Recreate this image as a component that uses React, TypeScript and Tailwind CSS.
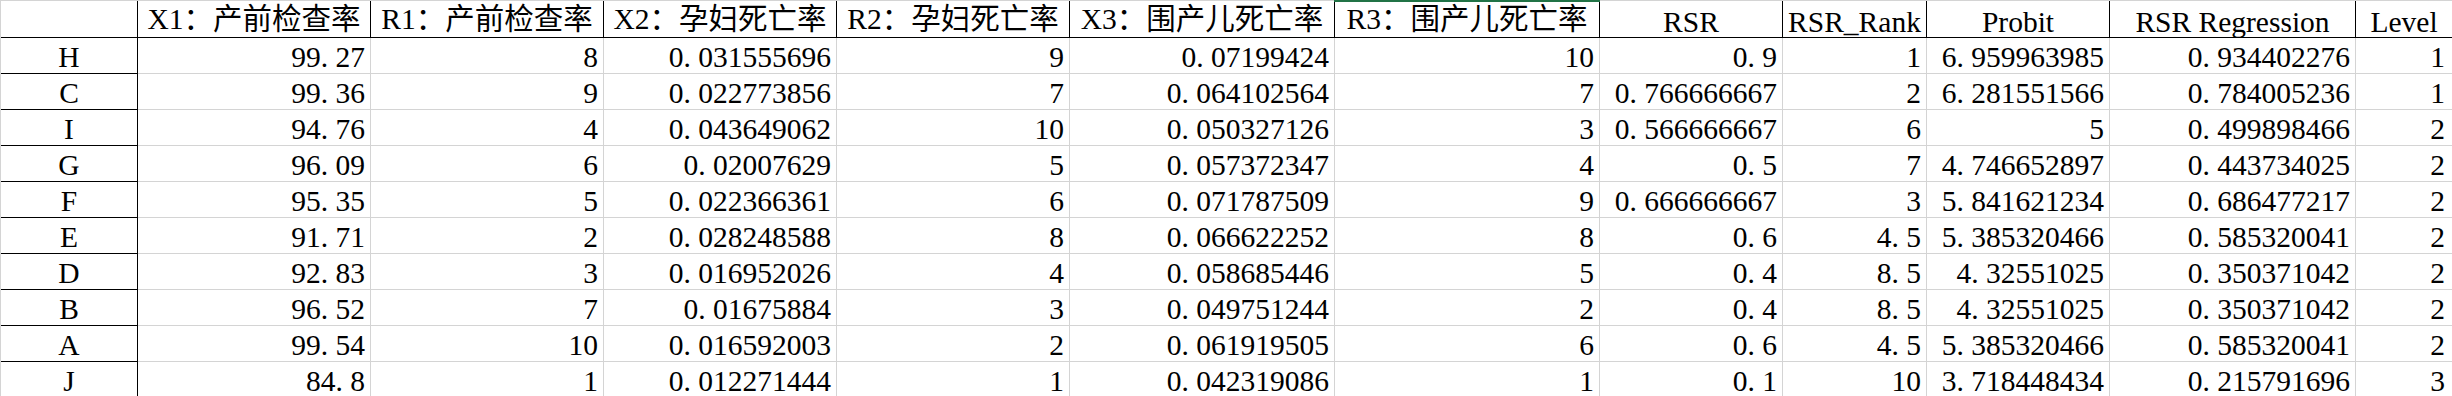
import React from "react";

const headers = [
  "",
  "X1：产前检查率",
  "R1：产前检查率",
  "X2：孕妇死亡率",
  "R2：孕妇死亡率",
  "X3：围产儿死亡率",
  "R3：围产儿死亡率",
  "RSR",
  "RSR_Rank",
  "Probit",
  "RSR Regression",
  "Level",
];

const rows: string[][] = [
  ["H", "99.27", "8", "0.031555696", "9", "0.07199424", "10", "0.9", "1", "6.959963985", "0.934402276", "1"],
  ["C", "99.36", "9", "0.022773856", "7", "0.064102564", "7", "0.766666667", "2", "6.281551566", "0.784005236", "1"],
  ["I", "94.76", "4", "0.043649062", "10", "0.050327126", "3", "0.566666667", "6", "5", "0.499898466", "2"],
  ["G", "96.09", "6", "0.02007629", "5", "0.057372347", "4", "0.5", "7", "4.746652897", "0.443734025", "2"],
  ["F", "95.35", "5", "0.022366361", "6", "0.071787509", "9", "0.666666667", "3", "5.841621234", "0.686477217", "2"],
  ["E", "91.71", "2", "0.028248588", "8", "0.066622252", "8", "0.6", "4.5", "5.385320466", "0.585320041", "2"],
  ["D", "92.83", "3", "0.016952026", "4", "0.058685446", "5", "0.4", "8.5", "4.32551025", "0.350371042", "2"],
  ["B", "96.52", "7", "0.01675884", "3", "0.049751244", "2", "0.4", "8.5", "4.32551025", "0.350371042", "2"],
  ["A", "99.54", "10", "0.016592003", "2", "0.061919505", "6", "0.6", "4.5", "5.385320466", "0.585320041", "2"],
  ["J", "84.8", "1", "0.012271444", "1", "0.042319086", "1", "0.1", "10", "3.718448434", "0.215791696", "3"],
];

function Num({ v }: { v: string }) {
  const i = v.indexOf(".");
  if (i < 0) return <>{v}</>;
  return (
    <>
      {v.slice(0, i)}
      <span className="inline-block w-[0.5em] text-left">.</span>
      {v.slice(i + 1)}
    </>
  );
}

function hasCJK(s: string) {
  return /[\u3000-\u9fff\uff00-\uffef]/.test(s);
}

export default function App() {
  return (
    <div className="w-[2452px] h-[396px] overflow-hidden bg-white text-black font-['Liberation_Serif','Noto_Sans_CJK_SC',serif] text-[29.5px]">
      <div className="grid w-max grid-cols-[137px_233px_233px_233px_233px_265px_265px_183px_144px_183px_246px_97px] border-l border-t border-[#d4d4d4]">
        {headers.map((h, ci) => (
          <div
            key={"h" + ci}
            className={
              "relative h-[37px] overflow-visible whitespace-nowrap text-center leading-[32px] border-r border-b border-black " +
              (hasCJK(h) ? "pt-[2px]" : "pt-[5px]")
            }
          >
            {ci === 6 && (
              <span className="absolute -top-px -left-px -right-px h-[2px] bg-[#217346]" />
            )}
            {h}
          </div>
        ))}
        {rows.map((r, ri) =>
          r.map((c, ci) =>
            ci === 0 ? (
              <div
                key={ri + "-" + ci}
                className="h-[36px] overflow-hidden whitespace-nowrap text-center pt-[3px] leading-[32px] border-r border-b border-black"
              >
                {c}
              </div>
            ) : (
              <div
                key={ri + "-" + ci}
                className={
                  "h-[36px] overflow-hidden whitespace-nowrap text-right pt-[3px] leading-[32px] border-r border-b border-[#d4d4d4] " +
                  (ci === 11 ? "pr-[7px]" : "pr-[5px]")
                }
              >
                <Num v={c} />
              </div>
            )
          )
        )}
      </div>
    </div>
  );
}
